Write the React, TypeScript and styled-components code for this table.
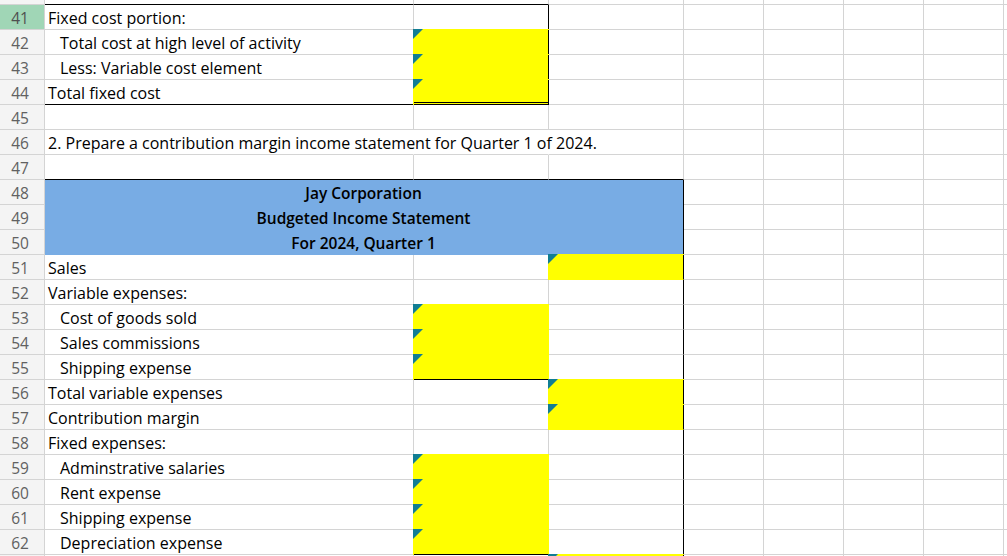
import styled, { createGlobalStyle } from "styled-components";

const GRID = "#d4d4d4";
const YELLOW = "#ffff00";
const BLUE = "#78ace4";

const GlobalStyle = createGlobalStyle`
  html, body {
    margin: 0;
    padding: 0;
    background: #fff;
    overflow: hidden;
  }
  body {
    font-family: "Open Sans", Lato, "Liberation Sans", sans-serif;
  }
`;

type Edge = "solid" | "double";

type CellSpec = {
  fill?: string;
  note?: boolean;
  bottom?: Edge;
  right?: boolean;
  open?: boolean;
};

type RowSpec = {
  n: number;
  label?: string;
  indent?: boolean;
  a?: CellSpec;
  b?: CellSpec;
  c?: CellSpec;
  title?: string[];
  selected?: boolean;
  hideNumber?: boolean;
};

const Sheet = styled.div`
  display: grid;
  grid-template-columns: 45px 369px 135px 135px repeat(5, 80px);
  grid-template-rows: 5px;
  grid-auto-rows: 25px;
  width: max-content;
`;

const RowHead = styled.div<{ $selected?: boolean }>`
  box-sizing: border-box;
  background: ${(p) => (p.$selected ? "#a0d6b6" : "#f4f4f4")};
  border-right: 1px solid ${GRID};
  border-bottom: 1px solid ${GRID};
  color: ${(p) => (p.$selected ? "#4f4f4f" : "#616161")};
  font-size: 15.5px;
  line-height: 26px;
  text-align: center;
  padding-right: 4px;
  overflow: hidden;
`;

const Cell = styled.div<{
  $fill?: string;
  $bottom?: Edge;
  $right?: boolean;
  $open?: boolean;
  $indent?: boolean;
  $note?: boolean;
}>`
  box-sizing: border-box;
  position: ${(p) => (p.$note ? "relative" : "static")};
  background: ${(p) => p.$fill ?? "transparent"};
  border-right: 1px solid
    ${(p) =>
      p.$right ? "#000" : p.$fill ? p.$fill : p.$open ? "transparent" : GRID};
  border-bottom: ${(p) =>
    p.$bottom === "double"
      ? "3px double #000"
      : `1px solid ${p.$bottom ? "#000" : p.$fill ? p.$fill : GRID}`};
  box-shadow: ${(p) =>
    p.$fill
      ? `-1px -1px 0 0 ${p.$fill}, 0 -1px 0 0 ${p.$fill}, -1px 0 0 0 ${p.$fill}`
      : "none"};
  padding-left: ${(p) => (p.$indent ? "15px" : "3px")};
  color: #000;
  font-size: 16px;
  line-height: 26px;
  white-space: nowrap;
  overflow: visible;
`;

const Note = styled.span`
  position: absolute;
  left: -1px;
  top: -1px;
  width: 10px;
  height: 10px;
  background: #117d93;
  clip-path: polygon(0 0, 100% 0, 0 100%);
`;

const TitleBlock = styled.div`
  grid-column: span 3;
  grid-row: span 3;
  box-sizing: border-box;
  background: ${BLUE};
  border-right: 1px solid #000;
  border-bottom: 1px solid ${BLUE};
  display: flex;
  flex-direction: column;
  align-items: center;
  padding-right: 1px;
`;

const TitleLine = styled.div`
  height: 25px;
  line-height: 26px;
  font-size: 15.5px;
  font-weight: 600;
  color: #000;
  white-space: nowrap;
`;

const rows: RowSpec[] = [
  { n: 40, hideNumber: true, a: { bottom: "solid" }, b: { bottom: "solid" } },
  { n: 41, label: "Fixed cost portion:", selected: true, b: { right: true } },
  {
    n: 42,
    label: "Total cost at high level of activity",
    indent: true,
    b: { fill: YELLOW, note: true, right: true },
  },
  {
    n: 43,
    label: "Less: Variable cost element",
    indent: true,
    b: { fill: YELLOW, note: true, right: true, bottom: "solid" },
  },
  {
    n: 44,
    label: "Total fixed cost",
    a: { bottom: "solid" },
    b: { fill: YELLOW, note: true, right: true, bottom: "double" },
  },
  { n: 45 },
  {
    n: 46,
    label:
      "2. Prepare a contribution margin income statement for Quarter 1 of 2024.",
    a: { open: true },
    b: { open: true },
  },
  {
    n: 47,
    a: { bottom: "solid" },
    b: { bottom: "solid" },
    c: { bottom: "solid" },
  },
  {
    n: 48,
    title: ["Jay Corporation", "Budgeted Income Statement", "For 2024, Quarter 1"],
  },
  { n: 49 },
  { n: 50 },
  { n: 51, label: "Sales", c: { fill: YELLOW, note: true, right: true } },
  { n: 52, label: "Variable expenses:", c: { right: true } },
  {
    n: 53,
    label: "Cost of goods sold",
    indent: true,
    b: { fill: YELLOW, note: true },
    c: { right: true },
  },
  {
    n: 54,
    label: "Sales commissions",
    indent: true,
    b: { fill: YELLOW, note: true },
    c: { right: true },
  },
  {
    n: 55,
    label: "Shipping expense",
    indent: true,
    b: { fill: YELLOW, note: true, bottom: "solid" },
    c: { right: true },
  },
  {
    n: 56,
    label: "Total variable expenses",
    c: { fill: YELLOW, note: true, right: true, bottom: "solid" },
  },
  {
    n: 57,
    label: "Contribution margin",
    c: { fill: YELLOW, note: true, right: true },
  },
  { n: 58, label: "Fixed expenses:", c: { right: true } },
  {
    n: 59,
    label: "Adminstrative salaries",
    indent: true,
    b: { fill: YELLOW, note: true },
    c: { right: true },
  },
  {
    n: 60,
    label: "Rent expense",
    indent: true,
    b: { fill: YELLOW, note: true },
    c: { right: true },
  },
  {
    n: 61,
    label: "Shipping expense",
    indent: true,
    b: { fill: YELLOW, note: true },
    c: { right: true },
  },
  {
    n: 62,
    label: "Depreciation expense",
    indent: true,
    b: { fill: YELLOW, note: true, bottom: "solid" },
    c: { right: true },
  },
  { n: 63, hideNumber: true, c: { fill: YELLOW, note: true, right: true } },
];

// rows covered by the merged title block
const TITLE_ROWS = [49, 50];

const SpecCell = ({
  spec,
  children,
  indent,
}: {
  spec?: CellSpec;
  children?: string;
  indent?: boolean;
}) => (
  <Cell
    $fill={spec?.fill}
    $bottom={spec?.bottom}
    $right={spec?.right}
    $open={spec?.open}
    $note={spec?.note}
    $indent={indent}
  >
    {spec?.note && <Note />}
    {children}
  </Cell>
);

const EmptyCols = () => (
  <>
    {[0, 1, 2, 3, 4].map((i) => (
      <Cell key={i} />
    ))}
  </>
);

const App = () => {
  return (
    <>
      <GlobalStyle />
      <Sheet>
        {rows.map((row) => {
          const inTitle = TITLE_ROWS.includes(row.n);
          return (
            <Row key={row.n}>
              <RowHead $selected={row.selected}>
                {row.hideNumber ? "" : row.n}
              </RowHead>
              {row.title ? (
                <TitleBlock>
                  {row.title.map((t) => (
                    <TitleLine key={t}>{t}</TitleLine>
                  ))}
                </TitleBlock>
              ) : (
                !inTitle && (
                  <>
                    <SpecCell spec={row.a} indent={row.indent}>
                      {row.label}
                    </SpecCell>
                    <SpecCell spec={row.b} />
                    <SpecCell spec={row.c} />
                  </>
                )
              )}
              <EmptyCols />
            </Row>
          );
        })}
      </Sheet>
    </>
  );
};

const Row = ({ children }: { children: React.ReactNode }) => <>{children}</>;

export default App;
